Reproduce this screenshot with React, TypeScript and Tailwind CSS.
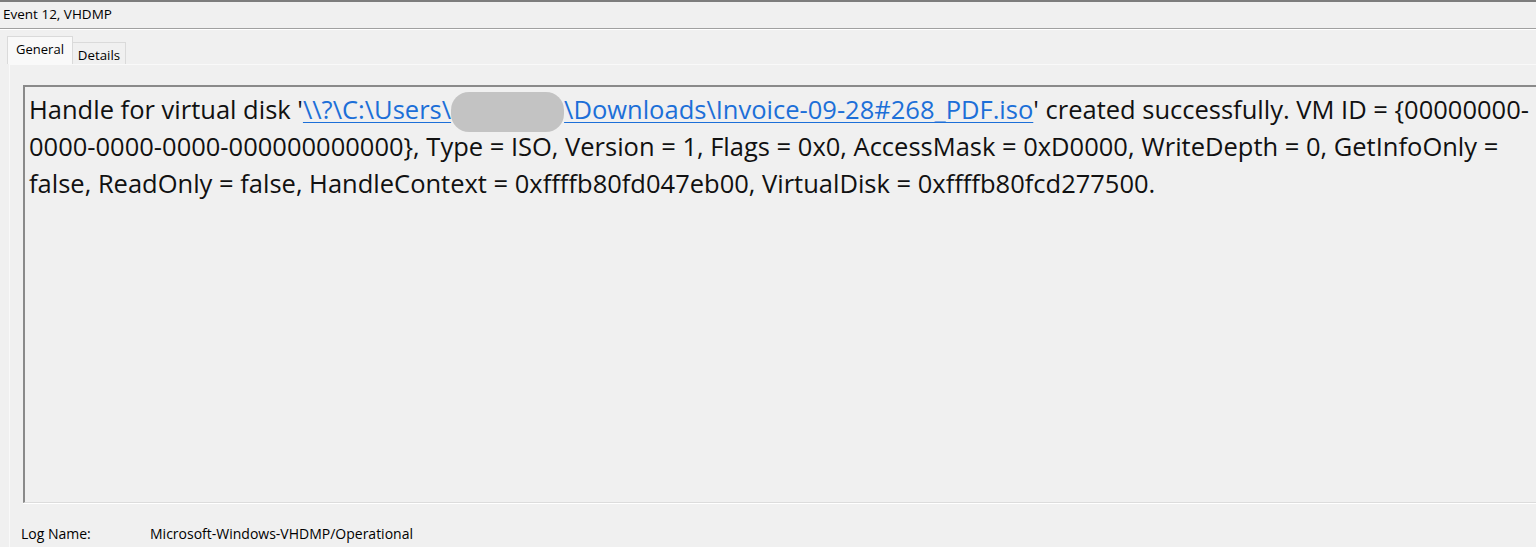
import React from 'react';

const FONT = { fontFamily: '"Segoe UI", "Open Sans", "Noto Sans", sans-serif' };

const App: React.FC = () => {
  return (
    <div className="w-[1536px] h-[547px] overflow-hidden bg-[#f0f0f0] text-black" style={FONT}>
      {/* Title */}
      <div className="h-[29px] border-t-2 border-[#7d7d7d] border-b border-b-[#a0a0a0] pl-[3px] pt-[3px] text-[13.5px] leading-[18px]">
        Event 12, VHDMP
      </div>
      <div className="h-px bg-white" />

      {/* Tabs */}
      <div className="flex items-end h-[34px] pl-[7px]">
        <div className="h-[28px] w-[66px] bg-[#f9f9f9] border border-b-0 border-[#dadada] text-[13px] leading-[24px] text-center">
          General
        </div>
        <div className="h-[22px] w-[53px] border border-l-0 border-b-0 border-[#dadada] text-[13.3px] leading-[22px] text-center pt-[1px]">
          Details
        </div>
      </div>

      {/* Panel */}
      <div className="ml-[9px] border-l border-t border-[#f9f9f9] h-[500px] pt-[20px] pl-[13px]">
        <div className="h-[418px] border-l-2 border-t-2 border-[#8a8a8a] border-b border-b-[#dcdcdc] bg-[#f0f0f0] pl-[4px] pt-[4px]">
          <div className="text-[25.5px] leading-[37px] whitespace-nowrap text-[#111]">
            <div>
              Handle for virtual disk '
              <span className="text-[#1c6fd8] underline underline-offset-[3px] decoration-1">\\?\C:\Users\</span>
              <span className="inline-block align-middle w-[113px] h-[40px] rounded-[18px] bg-[#c3c3c3] -my-[4px]" />
              <span className="text-[#1c6fd8] underline underline-offset-[3px] decoration-1">\Downloads\Invoice-09-28#268_PDF.iso</span>
              ' created successfully. VM ID = {'{'}00000000-
            </div>
            <div>
              0000-0000-0000-000000000000{'}'}, Type = ISO, Version = 1, Flags = 0x0, AccessMask = 0xD0000, WriteDepth = 0, GetInfoOnly =
            </div>
            <div>
              false, ReadOnly = false, HandleContext = 0xffffb80fd047eb00, VirtualDisk = 0xffffb80fcd277500.
            </div>
          </div>
        </div>
        <div className="h-px bg-white" />
        <div className="flex text-[14px] leading-[18px] pt-[21px] -ml-[2px]">
          <span className="w-[129px]">Log Name:</span>
          <span>Microsoft-Windows-VHDMP/Operational</span>
        </div>
      </div>
    </div>
  );
};

export default App;
